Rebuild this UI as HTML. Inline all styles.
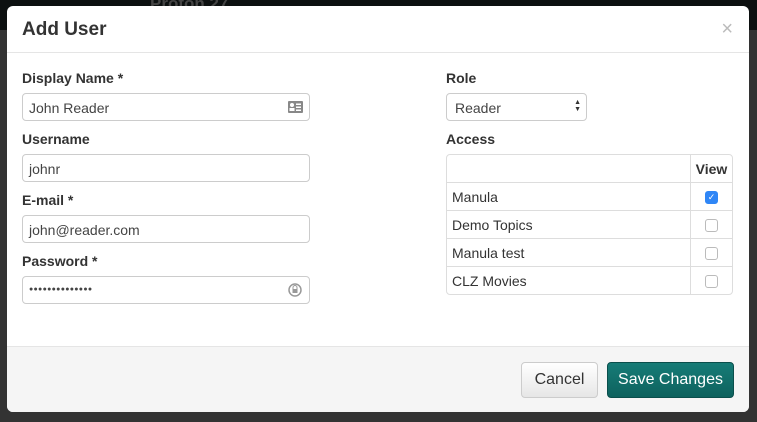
<!DOCTYPE html>
<html><head><style>
*{box-sizing:border-box;margin:0;padding:0}
body{width:757px;height:422px;overflow:hidden;background:#333;font-family:"Liberation Sans",sans-serif;position:relative}
.bgtop{position:absolute;left:0;top:0;width:757px;height:30px;background:#0c1010}
.bgtop span{position:absolute;left:150px;top:-6px;color:#444;font-size:17px;font-weight:bold}
.modal{position:absolute;left:7px;top:6px;width:742px;height:406px;background:#fff;border-radius:6px;overflow:hidden}
.hdr{position:absolute;left:0;top:0;width:100%;height:47px;border-bottom:1px solid #e5e5e5}
.hdr h4{position:absolute;left:15px;top:13px;font-size:19px;font-weight:bold;color:#333}
.x{position:absolute;right:16px;top:12px;color:#bbb;font-size:20px}
.ab{position:absolute}
.lbl{font-size:14px;font-weight:bold;color:#333}
.inp{border:1px solid #ccc;border-radius:4px;height:28px;width:288px;font-size:14px;color:#444;padding:6px 6px;background:#fff}
table{position:absolute;left:439px;top:148px;width:287px;border-collapse:separate;border-spacing:0;border:1px solid #ddd;border-radius:4px;font-size:14px;color:#333}
th{height:27px}
td{height:28px}
td,th{border-top:1px solid #ddd;padding:0 5px;text-align:left}
tr:first-child th{border-top:none}
td+td,th+th{border-left:1px solid #ddd;width:42px;text-align:center;padding:0}
.cb{display:inline-block;width:13px;height:13px;border:1px solid #bbb;border-radius:3px;vertical-align:middle}
.cb.on{background:#2f86f6;border-color:#2f86f6;color:#fff;font-size:9px;line-height:11px;text-align:center}
.ftr{position:absolute;left:0;top:340px;width:100%;height:66px;background:#f5f5f5;border-top:1px solid #e5e5e5}
.btn{position:absolute;top:15px;height:36px;border-radius:4px;font-size:16px;line-height:34px;text-align:center}
</style></head><body>
<div class="bgtop"><span>Proton 27</span></div>
<div class="modal">
<div class="hdr"><h4>Add User</h4><div class="x">×</div></div>
<div class="ab lbl" style="left:15px;top:64px">Display Name *</div>
<div class="ab inp" style="left:15px;top:87px">John Reader
<svg style="position:absolute;right:6px;top:7px" width="15" height="12"><rect x="0" y="0" width="15" height="12" rx="1" fill="#888"/><circle cx="4" cy="4" r="2" fill="#fff"/><rect x="1.5" y="7" width="5" height="3" fill="#fff"/><rect x="8" y="2.5" width="5" height="1.5" fill="#fff"/><rect x="8" y="5.5" width="5" height="1.5" fill="#fff"/><rect x="8" y="8.5" width="5" height="1.5" fill="#fff"/></svg></div>
<div class="ab lbl" style="left:15px;top:125px">Username</div>
<div class="ab inp" style="left:15px;top:148px">johnr</div>
<div class="ab lbl" style="left:15px;top:186px">E-mail *</div>
<div class="ab inp" style="left:15px;top:209px">john@reader.com</div>
<div class="ab lbl" style="left:15px;top:247px">Password *</div>
<div class="ab inp" style="left:15px;top:270px;font-size:7px;letter-spacing:0.3px;padding-top:9px">●●●●●●●●●●●●●●
<svg style="position:absolute;right:7px;top:6px" width="14" height="15"><circle cx="7" cy="7" r="6" fill="none" stroke="#999" stroke-width="1.5"/><rect x="4.5" y="6" width="5" height="4" fill="#999"/><path d="M5 6V4.5a2 2 0 0 1 4 0V6" fill="none" stroke="#999"/></svg></div>
<div class="ab lbl" style="left:439px;top:64px">Role</div>
<div class="ab inp" style="left:439px;top:87px;width:141px;padding-left:8px">Reader<span style="position:absolute;right:5px;top:5px;font-size:7px;line-height:7px;color:#333">▲<br>▼</span></div>
<div class="ab lbl" style="left:439px;top:125px">Access</div>
<table>
<tr><th></th><th>View</th></tr>
<tr><td>Manula</td><td><span class="cb on">✓</span></td></tr>
<tr><td>Demo Topics</td><td><span class="cb"></span></td></tr>
<tr><td>Manula test</td><td><span class="cb"></span></td></tr>
<tr><td>CLZ Movies</td><td><span class="cb"></span></td></tr>
</table>
<div class="ftr">
<div class="btn" style="left:514px;width:77px;border:1px solid #ccc;background:linear-gradient(#fff,#e6e6e6);color:#333">Cancel</div>
<div class="btn" style="left:600px;width:127px;border:1px solid #0a4f4c;background:linear-gradient(#167c77,#0e625e);color:#fff">Save Changes</div>
</div>
</div>
</body></html>
